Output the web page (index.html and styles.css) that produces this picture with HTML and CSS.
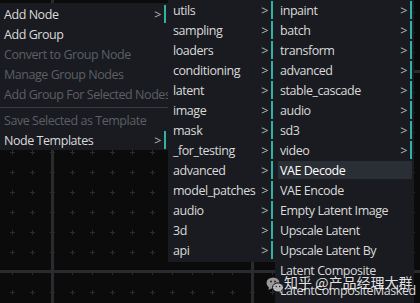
FILE: index.html
```html
<!DOCTYPE html>
<html lang="en">
<head>
    <meta charset="UTF-8">
    <meta name="viewport" content="width=device-width, initial-scale=1.0">
    <title>Node Menu</title>
    <link rel="stylesheet" href="styles.css">
</head>
<body>

    <div class="canvas">
        <!-- graph background: small crosses every 20px, heavier lines every 200px -->
        <svg class="grid" width="420" height="303">
            <defs>
                <pattern id="cross" width="20" height="20" patternUnits="userSpaceOnUse">
                    <rect x="10" y="12" width="5" height="1" fill="#2b2b2d"></rect>
                    <rect x="12" y="10" width="1" height="5" fill="#2b2b2d"></rect>
                </pattern>
            </defs>
            <rect width="420" height="303" fill="url(#cross)"></rect>
            <rect x="51" y="0" width="3" height="303" fill="#2a2b2e"></rect>
            <rect x="251" y="0" width="3" height="303" fill="#2a2b2e"></rect>
            <rect x="0" y="70" width="420" height="3" fill="#2a2b2e"></rect>
            <rect x="0" y="270" width="420" height="3" fill="#2a2b2e"></rect>
        </svg>

        <div class="menu menu-main">
            <div class="entry sub">Add Node</div>
            <div class="entry">Add Group</div>
            <div class="entry off">Convert to Group Node</div>
            <div class="entry off">Manage Group Nodes</div>
            <div class="entry off">Add Group For Selected Nodes</div>
            <div class="sep"></div>
            <div class="entry off">Save Selected as Template</div>
            <div class="entry sub">Node Templates</div>
        </div>

        <div class="menu menu-cats">
            <div class="entry sub">utils</div>
            <div class="entry sub">sampling</div>
            <div class="entry sub">loaders</div>
            <div class="entry sub">conditioning</div>
            <div class="entry sub">latent</div>
            <div class="entry sub">image</div>
            <div class="entry sub">mask</div>
            <div class="entry sub">_for_testing</div>
            <div class="entry sub">advanced</div>
            <div class="entry sub">model_patches</div>
            <div class="entry sub">audio</div>
            <div class="entry sub">3d</div>
            <div class="entry sub">api</div>
        </div>

        <div class="menu menu-latent">
            <div class="entry sub">inpaint</div>
            <div class="entry sub">batch</div>
            <div class="entry sub">transform</div>
            <div class="entry sub">advanced</div>
            <div class="entry sub">stable_cascade</div>
            <div class="entry sub">audio</div>
            <div class="entry sub">sd3</div>
            <div class="entry sub">video</div>
            <div class="entry active">VAE Decode</div>
            <div class="entry">VAE Encode</div>
            <div class="entry">Empty Latent Image</div>
            <div class="entry">Upscale Latent</div>
            <div class="entry">Upscale Latent By</div>
            <div class="entry">Latent Composite</div>
            <div class="entry">LatentCompositeMasked</div>
        </div>

        <div class="watermark">
            <svg class="wechat" width="18" height="18" viewBox="0 0 18 18">
                <ellipse cx="7" cy="7" rx="6.5" ry="5.5" fill="#9a9a9a"></ellipse>
                <path d="M3 11 L2.5 14 L6 12 Z" fill="#9a9a9a"></path>
                <ellipse cx="12" cy="11.5" rx="5.5" ry="4.6" fill="#b5b5b5" stroke="#0e0f12" stroke-width="1"></ellipse>
                <path d="M15 15 L16 17.5 L13 16 Z" fill="#b5b5b5"></path>
                <circle cx="5" cy="5.5" r="0.9" fill="#1b1c20"></circle>
                <circle cx="9" cy="5.5" r="0.9" fill="#1b1c20"></circle>
                <circle cx="10.3" cy="10.5" r="0.7" fill="#1b1c20"></circle>
                <circle cx="13.7" cy="10.5" r="0.7" fill="#1b1c20"></circle>
            </svg>
            <span>知乎 @产品经理大群</span>
        </div>
    </div>

</body>
</html>
```

FILE: styles.css
```css
body {
    margin: 0;
    padding: 0;
    width: 420px;
    height: 303px;
    overflow: hidden;
    background-color: #0b0b0c; /* graph canvas */
    font-family: "Open Sans", "Noto Sans", sans-serif;
}

.canvas {
    position: relative;
    width: 420px;
    height: 303px;
}

.grid {
    position: absolute;
    left: 0;
    top: 0;
}

/* context menus */
.menu {
    position: absolute;
    display: flex;
    flex-direction: column;
    gap: 2px;
    box-sizing: border-box;
    background-color: #191b20;
}

.menu-main {
    left: -1px;
    top: 3px;
    width: 169px;
    padding: 2px 0 1px 0;
}

.menu-cats {
    left: 168px;
    top: 0;
    width: 107px;
    padding: 1px 0 3px 0;
}

.menu-latent {
    left: 275px;
    top: 0;
    width: 139px;
    padding: 1px 0 10px 0;
}

.entry {
    height: 18px;
    margin: 0 2px 0 3px;
    padding: 0 3px 0 2px;
    display: flex;
    align-items: center;
    justify-content: space-between;
    font-size: 12.5px;
    letter-spacing: -0.45px;
    color: #dadada;
    white-space: nowrap;
}

.entry.sub {
    border-right: 2px solid #2fb3a6; /* teal submenu marker */
}

.entry.sub::after {
    content: ">";
    color: #b4b4b4;
}

.entry.off {
    color: #5c5f65; /* disabled */
}

.entry.active {
    background-color: #2a2e35;
    color: #ffffff;
}

.sep {
    height: 1px;
    margin: 2px 0 1px 0;
    background-color: #3a3c41;
}

/* watermark laid over the screenshot */
.watermark {
    position: absolute;
    left: 266px;
    top: 276px;
    display: flex;
    align-items: center;
    color: rgba(255, 255, 255, 0.88);
    font-family: "Noto Sans CJK SC", sans-serif;
    font-size: 14px;
}

.watermark span {
    margin-top: -6px;
}
```
